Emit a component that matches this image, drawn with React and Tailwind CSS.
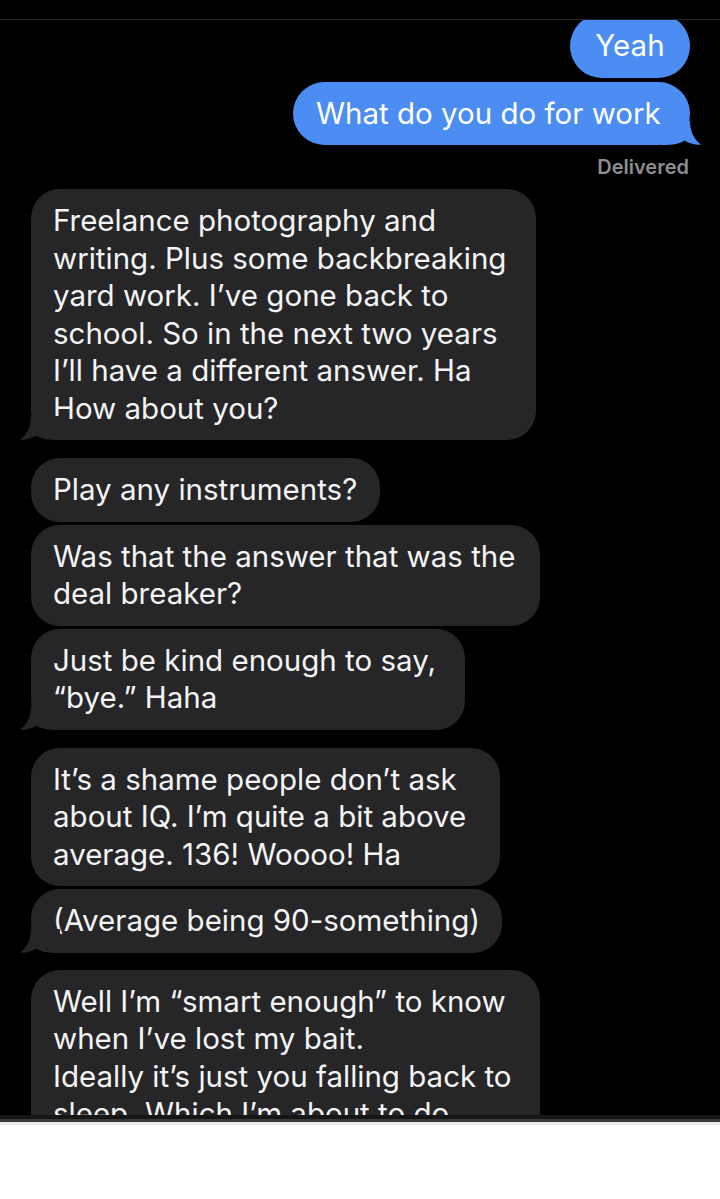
import React from "react";

const FONT = "font-['Inter','Liberation_Sans',sans-serif]";

function LeftTail() {
  return (
    <svg
      className="absolute left-[-11px] bottom-0"
      width="40"
      height="24"
      viewBox="0 0 40 24"
    >
      <path
        d="M11 0 C11 12 6 19 0 23.6 C6 24 12 22.6 16.5 19.5 C20.5 22.6 27 24 40 24 L40 0 Z"
        fill="#262628"
      />
    </svg>
  );
}

function RightTail() {
  return (
    <svg
      className="absolute right-[-11px] bottom-0 -scale-x-100"
      width="40"
      height="24"
      viewBox="0 0 40 24"
    >
      <path
        d="M11 0 C11 12 6 19 0 23.6 C6 24 12 22.6 16.5 19.5 C20.5 22.6 27 24 40 24 L40 0 Z"
        fill="#4b8df2"
      />
    </svg>
  );
}

function Gray({ className, lines, tail }) {
  return (
    <div
      className={
        "relative bg-[#262628] rounded-[29px] px-[22px] py-[13px] text-[#f4f4f4] text-[29.5px] leading-[37.5px] whitespace-nowrap " +
        className
      }
    >
      {lines.map((l, i) => (
        <div key={i}>{l}</div>
      ))}
      {tail && <LeftTail />}
    </div>
  );
}

export default function App() {
  return (
    <div className={"w-[720px] h-[1199px] bg-white flex flex-col " + FONT}>
      <div className="h-[19px] bg-black shrink-0" />
      <div className="h-[1px] bg-[#242424] shrink-0" />
      <div className="h-[1095px] bg-black overflow-hidden shrink-0 flex flex-col">
        {/* Sent */}
        <div className="flex flex-col items-end pr-[30px]">
          <div className="mt-[-6px] bg-[#4b8df2] rounded-[32px] px-[23px] py-[13px] text-white text-[29.5px] leading-[37.5px] whitespace-nowrap w-[120px] flex justify-center">
            Yeah
          </div>
          <div className="relative mt-[4px] bg-[#4b8df2] rounded-[32px] px-[23px] py-[13px] text-white text-[29.5px] leading-[37.5px] whitespace-nowrap w-[397px]">
            What do you do for work
            <RightTail />
          </div>
          <div className="mt-[10px] mr-[1px] text-[20px] leading-[24px] font-semibold text-[#8e8e93]">
            Delivered
          </div>
        </div>

        {/* Received */}
        <div className="flex flex-col items-start pl-[31px] mt-[10px]">
          <Gray
            className="w-[505px]"
            tail
            lines={[
              "Freelance photography and",
              "writing. Plus some backbreaking",
              "yard work. I\u2019ve gone back to",
              "school. So in the next two years",
              "I\u2019ll have a different answer. Ha",
              "How about you?",
            ]}
          />
          <Gray
            className="w-[349px] mt-[18px]"
            lines={["Play any instruments?"]}
          />
          <Gray
            className="w-[509px] mt-[3px]"
            lines={["Was that the answer that was the", "deal breaker?"]}
          />
          <Gray
            className="w-[434px] mt-[3px]"
            tail
            lines={["Just be kind enough to say,", "\u201Cbye.\u201D  Haha"]}
          />
          <Gray
            className="w-[469px] mt-[18px]"
            lines={[
              "It\u2019s a shame people don\u2019t ask",
              "about IQ. I\u2019m quite a bit above",
              "average. 136! Woooo! Ha",
            ]}
          />
          <Gray
            className="w-[471px] mt-[3px]"
            tail
            lines={["(Average being 90-something)"]}
          />
          <Gray
            className="w-[509px] mt-[17px]"
            lines={[
              "Well I\u2019m \u201Csmart enough\u201D to know",
              "when I\u2019ve lost my bait.",
              "Ideally it\u2019s just you falling back to",
              "sleep. Which I\u2019m about to do.",
            ]}
          />
        </div>
      </div>
      <div className="h-[4px] bg-[#161616] shrink-0" />
      <div className="h-[3px] bg-[#3a3a3a] shrink-0" />
      <div className="h-[3px] bg-[#ececec] shrink-0" />
      <div className="flex-1 bg-white" />
    </div>
  );
}
